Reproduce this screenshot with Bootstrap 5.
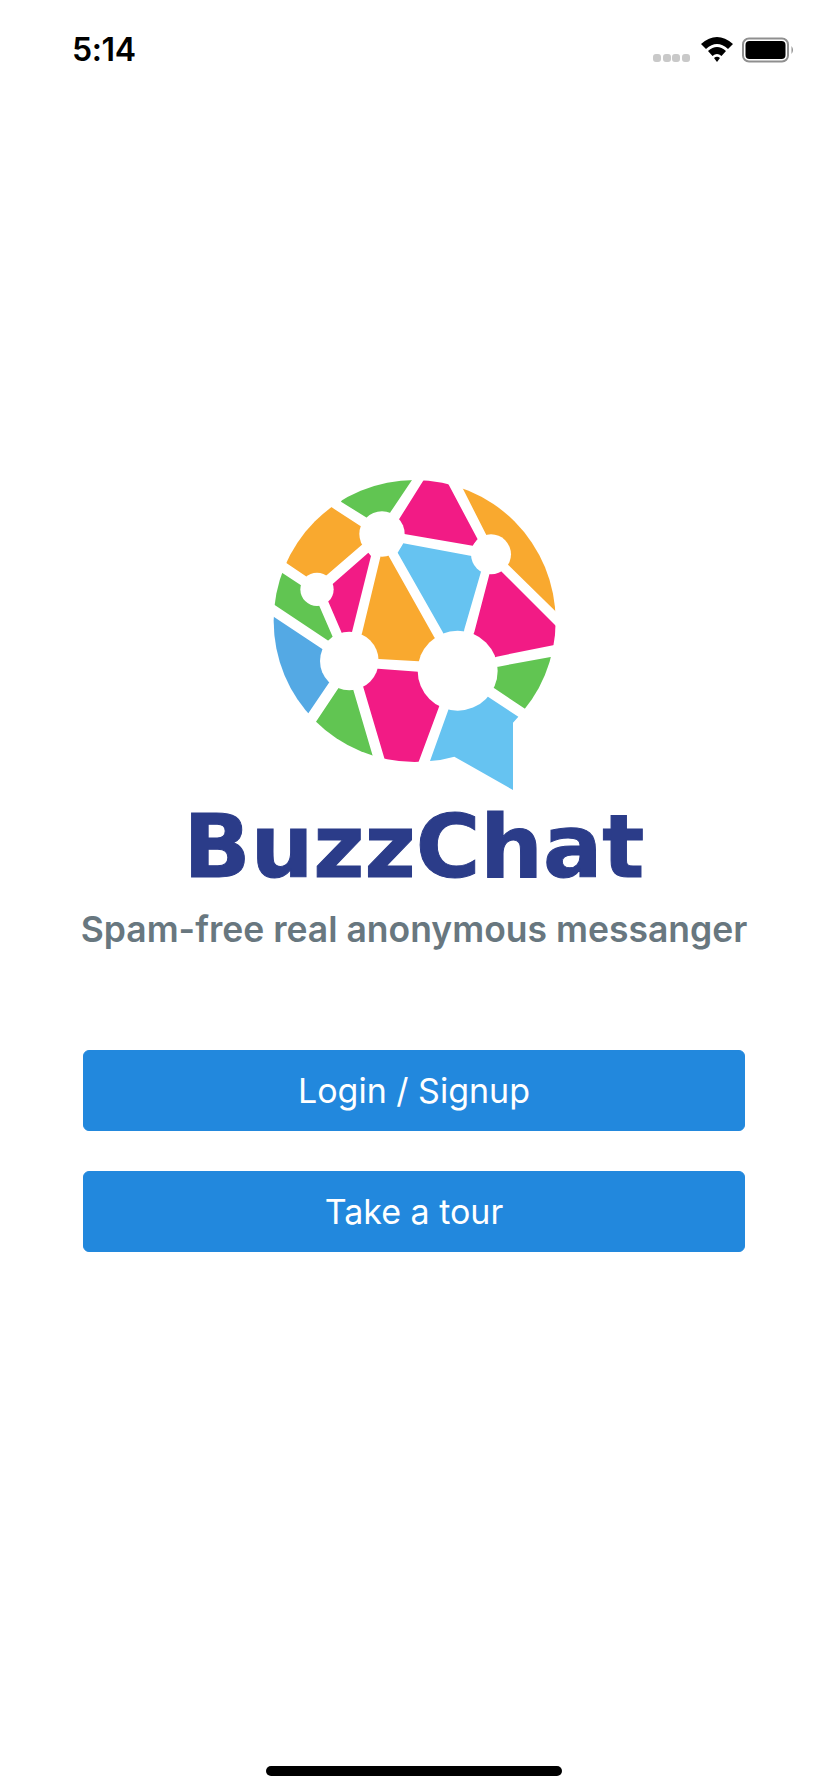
<!DOCTYPE html>
<html lang="en">
<head>
    <meta charset="UTF-8">
    <meta name="viewport" content="width=device-width, initial-scale=1.0">
    <title>BuzzChat</title>
    <link href="https://cdn.jsdelivr.net/npm/bootstrap@5.3.0/dist/css/bootstrap.min.css" rel="stylesheet">
    <style>
        body { background: #fff; }
        .app-screen { height: 1792px; width: 828px; }
        .status-row { height: 460px; padding: 26px 17px 0 72px; }
        .status-time { font: 600 32px/48px Inter, sans-serif; color: #000; letter-spacing: -0.4px; }
        .brand-logo { width: 330px; height: 340px; display: block; margin-left: 4px; }
        .brand-name { font: 700 88px/100px "DejaVu Sans", sans-serif; color: #2b3c89; margin: -3px 0 0; -webkit-text-stroke: 1px #2b3c89; }
        .brand-tag { font: 600 35.500px/44px Inter, sans-serif; color: #68777f; margin: 11px 0 0; white-space: nowrap; }
        .action-list { padding: 0 83px; margin-top: 98px; gap: 40px; }
        .action-btn { height: 81px; background: #2288dd; border-color: #2288dd; color: #fff; font: 400 34px/1 Inter, sans-serif; border-radius: 6px; }
        .home-bar { width: 296px; height: 10px; background: #000; border-radius: 5px; margin-bottom: 16px; }
    </style>
</head>
<body>
<div class="app-screen d-flex flex-column align-items-center">
    <!-- Status bar -->
    <div class="status-row w-100 d-flex justify-content-between align-items-start">
        <span class="status-time">5:14</span>
        <svg width="170" height="50" viewBox="0 0 170 50">
            <g fill="#c9c9c9">
                <rect x="12" y="28" width="8" height="8" rx="3"/>
                <rect x="22" y="28" width="8" height="8" rx="3"/>
                <rect x="31" y="28" width="8" height="8" rx="3"/>
                <rect x="41" y="28" width="8" height="8" rx="3"/>
            </g>
            <path d="M60 19 Q76 5 92 19 L87 24 Q76 14 65 24 Z M67 26 Q76 18 85 26 L80.500 31 Q76 27 71.500 31 Z M73 33 Q76 30.500 79 33 L76 37 Z" fill="#000" transform="translate(0 -1)"/>
            <rect x="102" y="12.500" width="45" height="23" rx="6" fill="none" stroke="#8f8f8f" stroke-width="2"/>
            <rect x="104.500" y="15" width="40" height="18" rx="4" fill="#000"/>
            <path d="M150.500 20 Q153.500 24 150.500 28 Z" fill="#8f8f8f"/>
        </svg>
    </div>

    <!-- Logo -->
    <svg class="brand-logo" viewBox="0 0 990 1020">
        <defs>
            <clipPath id="disc"><circle cx="491" cy="483" r="423"/></clipPath>
        </defs>
        <g clip-path="url(#disc)">
            <polygon fill="#61c552" points="270,125 345,172 393,222 418,157 483,60 450,20 300,50"/>
            <polygon fill="#f21b85" points="518,60 444,178 393,222 460,222 665,257 680,238 592,72 560,30"/>
            <polygon fill="#f9a92f" points="635,85 706,225 720,283 772,315 915,455 980,450 960,100 700,30"/>
            <polygon fill="#f9a92f" points="242,142 327,197 393,222 332,255 225,347 198,388 167,350 107,310 40,200 180,60"/>
            <polygon fill="#61c552" points="93,338 150,376 198,388 205,438 245,530 233,543 71,435 20,400 50,320"/>
            <polygon fill="#f21b85" points="352,278 245,372 198,388 232,425 272,518 295,603 303,516 360,288"/>
            <polygon fill="#f9a92f" points="388,292 393,222 413,288 549,530 620,632 503,604 383,597 295,603 333,520"/>
            <polygon fill="#66c3f1" points="457,250 662,288 720,283 690,335 640,508 620,632 575,516 440,278"/>
            <polygon fill="#f21b85" points="716,340 720,283 752,335 915,498 960,500 950,550 910,555 737,590 620,632 670,516"/>
            <polygon fill="#61c552" points="903,590 960,590 900,800 823,747 730,685 620,632 742,620"/>
            <polygon fill="#f21b85" points="381,626 502,635 620,632 565,738 503,905 490,950 400,950 400,895 337,682 295,603"/>
            <polygon fill="#61c552" points="262,685 295,603 307,690 365,887 350,950 200,900 195,785"/>
            <polygon fill="#54a9e4" points="68,470 215,568 295,603 235,667 172,760 60,800 0,560 20,440"/>
        </g>
        <path fill="#66c3f1" d="M712 711 L802 770 L786 788 L786 990 L610 890 Q575 900 537 903 L593 747 L620 632 Z"/>
        <g fill="#fff">
            <circle cx="393" cy="222" r="68"/>
            <circle cx="720" cy="283" r="60"/>
            <circle cx="198" cy="388" r="50"/>
            <circle cx="295" cy="603" r="88"/>
            <circle cx="620" cy="632" r="120"/>
        </g>
    </svg>

    <h1 class="brand-name">BuzzChat</h1>
    <p class="brand-tag">Spam-free real anonymous messanger</p>

    <!-- Actions -->
    <div class="action-list w-100 d-flex flex-column">
        <button type="button" class="btn action-btn w-100">Login / Signup</button>
        <button type="button" class="btn action-btn w-100">Take a tour</button>
    </div>

    <div class="home-bar mt-auto"></div>
</div>

<script src="https://cdn.jsdelivr.net/npm/bootstrap@5.3.0/dist/js/bootstrap.bundle.min.js"></script>
</body>
</html>
